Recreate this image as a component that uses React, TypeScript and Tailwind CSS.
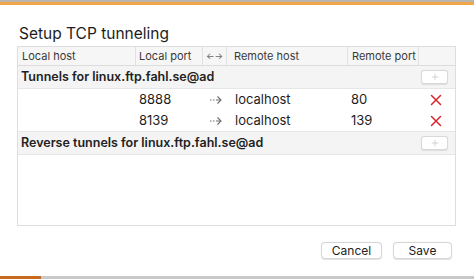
import { Plus } from "lucide-react";

const COLS = "grid grid-cols-[118px_67px_24px_121px_71px_37px]";

const tunnels = [
  { port: "8888", host: "localhost", remote: "80" },
  { port: "8139", host: "localhost", remote: "139" },
];

function Arrow() {
  return (
    <svg width="14" height="10" viewBox="0 0 14 10" fill="none" stroke="#6b6b6b" strokeWidth="1.1">
      <path d="M1 5h1.5M4 5h1.5M7 5h4" />
      <path d="M8.5 1.5L12 5L8.5 8.5" />
    </svg>
  );
}

function RemoveIcon() {
  return (
    <svg width="12" height="12" viewBox="0 0 12 12" fill="none" stroke="#d8252e" strokeWidth="1.5" strokeLinecap="round">
      <path d="M1.5 1.5L10.5 10.5M10.5 1.5L1.5 10.5" />
    </svg>
  );
}

function AddButton() {
  return (
    <div className="flex h-[14px] w-[27px] items-center justify-center rounded-[3px] border border-[#d9d9d9] bg-white shadow-[0_0.5px_1px_rgba(0,0,0,0.1)]">
      <Plus size={10} strokeWidth={1.3} color="#b5b5b5" />
    </div>
  );
}

function GroupRow({ label }: { label: string }) {
  return (
    <div className="flex h-[23px] items-center justify-between border-b border-[#e6e6e6] bg-[#f4f4f4] pl-[3px] pr-[7px]">
      <span className="text-[12.5px] font-semibold text-[#222]">{label}</span>
      <AddButton />
    </div>
  );
}

export default function App() {
  return (
    <div
      className="relative h-[279px] w-[474px] overflow-hidden bg-white"
      style={{ fontFamily: "Inter, 'Liberation Sans', sans-serif" }}
    >
      <div className="h-[2px] bg-[#b9b5ae]" />
      <div className="h-[3px] bg-[#f0a64a]" />

      <div className="px-[17px]">
        <h1 className="mt-[19px] pl-[2px] text-[15.5px] leading-[20px] text-[#1c1c1c]">Setup TCP tunneling</h1>

        <div className="mt-[2px] flex h-[180px] w-[439px] flex-col border border-[#dedede]">
          {/* header */}
          <div className={`${COLS} h-[19px] border-b border-[#dcdcdc] bg-[#f6f6f6] text-[11px] text-[#3a3a3a]`}>
            <div className="flex items-center border-r border-[#e0e0e0] pl-[4px]">Local host</div>
            <div className="flex items-center border-r border-[#e0e0e0] pl-[3px]">Local port</div>
            <div className="flex items-center justify-center border-r border-[#e0e0e0] text-[9px] text-[#666]">←→</div>
            <div className="flex items-center border-r border-[#e0e0e0] pl-[7px]">Remote host</div>
            <div className="flex items-center border-r border-[#e0e0e0] pl-[4px]">Remote port</div>
            <div />
          </div>

          <GroupRow label="Tunnels for linux.ftp.fahl.se@ad" />

          <div>
            {tunnels.map((t) => (
              <div key={t.port} className={`${COLS} h-[21px] items-center text-[13px] text-[#1e1e1e]`}>
                <div />
                <div className="pl-[3px]">{t.port}</div>
                <div className="flex justify-center pl-[2px]">
                  <Arrow />
                </div>
                <div className="pl-[8px]">{t.host}</div>
                <div className="pl-[3px]">{t.remote}</div>
                <div className="flex justify-center pr-[3px]">
                  <RemoveIcon />
                </div>
              </div>
            ))}
          </div>

          <div className="border-t border-[#e6e6e6]">
            <GroupRow label="Reverse tunnels for linux.ftp.fahl.se@ad" />
          </div>
          <div className="flex-1 bg-white" />
        </div>

        <div className="mt-[16px] flex justify-end gap-[11px] pr-[5px]">
          <button className="h-[17px] w-[61px] rounded-[4px] border border-[#d6d6d6] bg-white text-[12px] leading-none text-[#222] shadow-[0_0.5px_1px_rgba(0,0,0,0.12)]">
            Cancel
          </button>
          <button className="h-[17px] w-[59px] rounded-[4px] border border-[#d6d6d6] bg-white text-[12px] leading-none text-[#222] shadow-[0_0.5px_1px_rgba(0,0,0,0.12)]">
            Save
          </button>
        </div>
      </div>

      <div className="absolute bottom-0 left-0 flex h-[3px] w-full">
        <div className="w-[41px] bg-[#c9691f]" />
        <div className="flex-1 bg-[#c8c8c8]" />
      </div>
    </div>
  );
}
